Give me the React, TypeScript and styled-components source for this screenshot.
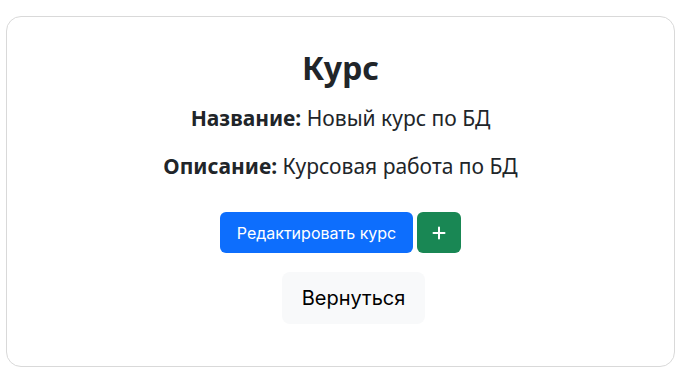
import React from 'react'
import styled, { createGlobalStyle } from 'styled-components'

const GlobalStyle = createGlobalStyle`
  body {
    margin: 0;
    background: #fff;
    font-family: "Noto Sans", "Liberation Sans", sans-serif;
    color: #212529;
  }
`

const Page = styled.div`
  padding: 16px 2px 3px 6px;
`

const Card = styled.div`
  border: 1px solid #d9d9d9;
  border-radius: 15px;
  height: 351px;
  box-sizing: border-box;
  display: flex;
  flex-direction: column;
  align-items: center;
  padding-top: 28px;
`

const Title = styled.h1`
  margin: 0 0 13px;
  font-size: 32px;
  font-weight: 700;
  line-height: 46px;
`

const Field = styled.p`
  margin: 0 0 20px;
  font-size: 21px;
  line-height: 28px;

  b {
    font-weight: 700;
  }
`

const Actions = styled.div`
  display: flex;
  gap: 4px;
  margin-top: 12px;
`

const Button = styled.button<{ $variant: 'primary' | 'success' | 'light'; $large?: boolean }>`
  border: none;
  border-radius: ${p => (p.$large ? '8px' : '6px')};
  font-family: "Inter", "Noto Sans", sans-serif;
  font-size: ${p => (p.$large ? '20px' : '16px')};
  height: ${p => (p.$large ? '52px' : '41px')};
  padding: ${p => (p.$large ? '0 20px' : '0 14px')};
  min-width: ${p => (p.$variant === 'success' ? '43px' : '0')};
  color: ${p => (p.$variant === 'light' ? '#000' : '#fff')};
  background: ${p =>
    p.$variant === 'primary' ? '#0d6efd' : p.$variant === 'success' ? '#198754' : '#f8f9fa'};
  display: flex;
  align-items: center;
  justify-content: center;
`

const EditButton = styled(Button)`
  padding: 0 17px;
`

const Back = styled.div`
  margin-top: 19px;
  margin-left: 26px;
`

const App: React.FC = () => {
  return (
    <Page>
      <GlobalStyle />
      <Card>
        <Title>Курс</Title>
        <Field><b>Название:</b> Новый курс по БД</Field>
        <Field><b>Описание:</b> Курсовая работа по БД</Field>
        <Actions>
          <EditButton $variant="primary">Редактировать курс</EditButton>
          <Button $variant="success">
            <svg width="16" height="16" viewBox="0 0 16 16" fill="none" stroke="#fff" strokeWidth="2" strokeLinecap="round">
              <path d="M8 2.5v11M2.5 8h11" />
            </svg>
          </Button>
        </Actions>
        <Back>
          <Button $variant="light" $large>Вернуться</Button>
        </Back>
      </Card>
    </Page>
  )
}

export default App
